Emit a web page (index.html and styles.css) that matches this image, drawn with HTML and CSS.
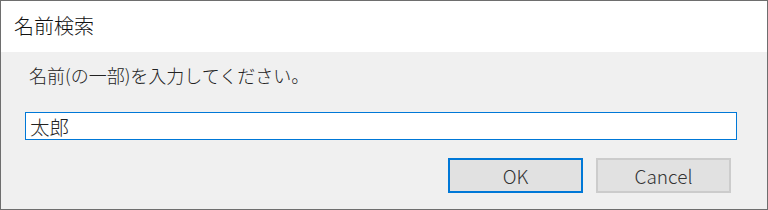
FILE: index.html
```html
<!DOCTYPE html>
<html lang="ja">
  <head>
    <meta charset="UTF-8" />
    <meta name="viewport" content="width=device-width, initial-scale=1.0" />
    <title>名前検索</title>
    <link rel="stylesheet" href="styles.css">
  </head>
  <body>
    <div class="dialog">
      <div class="titlebar">名前検索</div>
      <div class="content">
        <p class="prompt">名前(の一部)を入力してください。</p>
        <input type="text" class="name-input" value="太郎" />
        <div class="buttons">
          <button class="btn btn-default">OK</button>
          <button class="btn">Cancel</button>
        </div>
      </div>
    </div>
  </body>
</html>
```

FILE: styles.css
```css
* {
  margin: 0;
  padding: 0;
  box-sizing: border-box;
  font-family: "Noto Sans CJK JP", "Noto Sans", sans-serif;
}

body {
  background-color: #f0f0f0;
}

.dialog {
  width: 768px;
  height: 210px;
  border: 1px solid #6e6e6e;
  background-color: #f0f0f0;
  display: flex;
  flex-direction: column;
}

.titlebar {
  height: 51px;
  background-color: white;
  padding: 11px 13px 0;
  font-size: 20px;
  line-height: 28px;
  font-weight: 300;
  color: #111;
}

.content {
  flex: 1;
  padding: 11px 30px 0 24px;
}

.prompt {
  margin-left: 4px;
  font-size: 18px;
  line-height: 24px;
  font-weight: 300;
  color: #222;
}

.name-input {
  display: block;
  width: 712px;
  height: 28px;
  margin-top: 25px;
  padding: 0 4px;
  border: 1px solid #0078d7;
  background-color: white;
  font-size: 19.5px;
  font-weight: 300;
  color: #222;
  outline: none;
}

.buttons {
  display: flex;
  justify-content: flex-end;
  gap: 13px;
  margin-top: 18px;
  padding-right: 6px;
}

.btn {
  width: 135px;
  height: 35px;
  background-color: #e1e1e1;
  border: 2px solid #cccccc;
  font-size: 19px;
  font-weight: 300;
  color: #333;
}

.btn-default {
  border-color: #0078d7;
}
```
